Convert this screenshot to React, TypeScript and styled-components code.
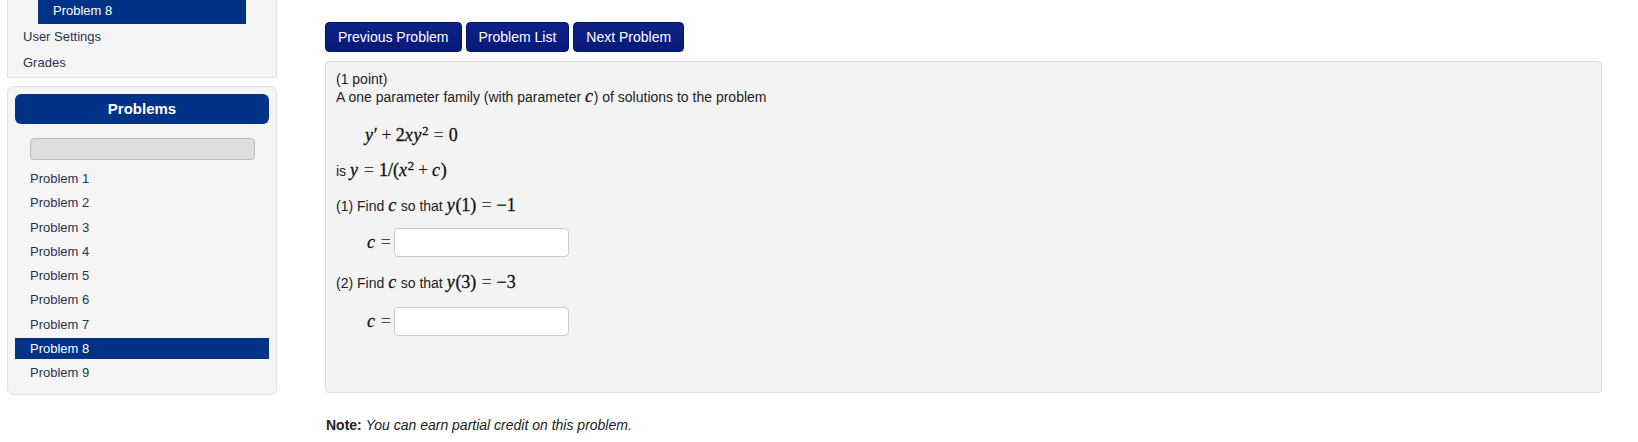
import React from "react";
import styled, { createGlobalStyle } from "styled-components";

const GlobalStyle = createGlobalStyle`
  html, body { margin: 0; padding: 0; background: #ffffff; }
  body {
    font-family: "Liberation Sans", Arial, sans-serif;
    font-size: 13px;
    color: #222;
    overflow: hidden;
  }
`;

const Page = styled.div`
  display: flex;
  align-items: flex-start;
  width: 1638px;
  height: 442px;
  overflow: hidden;
`;

const Sidebar = styled.aside`
  flex: 0 0 270px;
  margin-left: 7px;
  margin-top: -2px;
  display: flex;
  flex-direction: column;
  gap: 8px;
`;

const NavPanel = styled.nav`
  background: #f5f5f5;
  border: 1px solid #e3e3e3;
  border-top: none;
  padding: 0 0 1px;
`;

const NavItem = styled.a<{ $indent?: boolean; $active?: boolean }>`
  display: block;
  height: 26px;
  line-height: 26px;
  margin: ${(p) => (p.$indent ? "0 30px 0 30px" : "0")};
  padding-left: 15px;
  color: ${(p) => (p.$active ? "#ffffff" : "#1f3556")};
  background: ${(p) => (p.$active ? "#003388" : "transparent")};
  text-decoration: none;
  font-size: 13px;
`;

const ProblemsPanel = styled.section`
  background: #f5f5f5;
  border: 1px solid #e3e3e3;
  border-radius: 6px;
  padding: 7px 7px 11px;
  display: flex;
  flex-direction: column;
`;

const PanelHeader = styled.h2`
  margin: 0;
  height: 30px;
  line-height: 30px;
  background: #003388;
  color: #ffffff;
  border-radius: 6px;
  text-align: center;
  font-size: 15px;
  font-weight: bold;
`;

const SearchBox = styled.div`
  margin: 14px 14px 8px 15px;
  height: 20px;
  background: #dddddd;
  border: 1px solid #bdbdbd;
  border-radius: 4px;
`;

const ProblemList = styled.ul`
  list-style: none;
  margin: 0;
  padding: 0;
  display: flex;
  flex-direction: column;
  gap: 3.25px;
`;

const ProblemItem = styled.li<{ $active?: boolean }>`
  height: 21px;
  line-height: 21px;
  padding-left: 15px;
  font-size: 13px;
  color: ${(p) => (p.$active ? "#ffffff" : "#1f3556")};
  background: ${(p) => (p.$active ? "#003388" : "transparent")};
`;

const Main = styled.main`
  flex: 1;
  margin-left: 48px;
  margin-right: 36px;
  padding-top: 22px;
`;

const ButtonBar = styled.div`
  display: flex;
  gap: 4px;
  margin-bottom: 9px;
`;

const NavButton = styled.button`
  height: 30px;
  padding: 0 12px;
  border: 1px solid #06166a;
  border-radius: 4px;
  background: linear-gradient(#0d2288, #081a78);
  color: #ffffff;
  font-family: "Liberation Sans", Arial, sans-serif;
  font-size: 14px;
  cursor: pointer;
`;

const ProblemBox = styled.div`
  background: #f3f3f3;
  border: 1px solid #dcdcdc;
  border-radius: 4px;
  padding: 9px 10px 56px;
`;

const Text = styled.p<{ $mt?: number }>`
  margin: ${(p) => p.$mt ?? 0}px 0 0;
  font-size: 14px;
  line-height: 17px;
  color: #222;
`;

const MathLine = styled.p<{ $mt?: number }>`
  margin: ${(p) => p.$mt ?? 0}px 0 0;
  font-size: 14px;
  line-height: 22px;
  height: 22px;
  color: #222;
`;

const DisplayMath = styled.div<{ $mt?: number }>`
  margin: ${(p) => p.$mt ?? 0}px 0 0;
  padding-left: 29px;
  line-height: 22px;
  height: 22px;
`;

const Math = styled.span`
  font-family: "Liberation Serif", "DejaVu Serif", serif;
  font-size: 18px;
  color: #111;
  -webkit-text-stroke: 0.3px #111;
  white-space: nowrap;
`;

const V = styled.i`
  font-style: italic;
  margin-right: 0.04em;
`;

const Rel = styled.span<{ $tight?: boolean }>`
  margin: ${(p) => (p.$tight ? "0 0 0 0.28em" : "0 0.28em")};
  color: #444;
  -webkit-text-stroke: 0;
`;

const Bin = styled.span`
  margin: 0 0.22em;
  -webkit-text-stroke: 0;
`;

const Sup = styled.sup`
  font-size: 70%;
  line-height: 0;
  vertical-align: 0.5em;
`;

const AnswerRow = styled.div<{ $mt?: number }>`
  display: flex;
  align-items: center;
  margin-top: ${(p) => p.$mt ?? 0}px;
  padding-left: 31px;
  height: 29px;
`;

const AnswerInput = styled.input`
  box-sizing: border-box;
  width: 175px;
  height: 29px;
  margin-left: 3px;
  border: 1px solid #cccccc;
  border-radius: 4px;
  background: #ffffff;
  padding: 4px 6px;
  font-size: 13px;
`;

const Note = styled.p`
  margin: 24px 0 0 1px;
  font-size: 14px;
  line-height: 17px;
  color: #222;
  b { font-weight: bold; }
  i { font-style: italic; }
`;

const problems = [1, 2, 3, 4, 5, 6, 7, 8, 9];

export default function App() {
  return (
    <>
      <GlobalStyle />
      <Page>
        <Sidebar>
          <NavPanel>
            <NavItem $indent $active>Problem 8</NavItem>
            <NavItem>User Settings</NavItem>
            <NavItem>Grades</NavItem>
          </NavPanel>
          <ProblemsPanel>
            <PanelHeader>Problems</PanelHeader>
            <SearchBox />
            <ProblemList>
              {problems.map((n) => (
                <ProblemItem key={n} $active={n === 8}>
                  Problem {n}
                </ProblemItem>
              ))}
            </ProblemList>
          </ProblemsPanel>
        </Sidebar>
        <Main>
          <ButtonBar>
            <NavButton>Previous Problem</NavButton>
            <NavButton>Problem List</NavButton>
            <NavButton>Next Problem</NavButton>
          </ButtonBar>
          <ProblemBox>
            <Text>(1 point)</Text>
            <Text>
              A one parameter family (with parameter <Math><V>c</V></Math>) of
              solutions to the problem
            </Text>
            <DisplayMath $mt={18}>
              <Math>
                <V>y</V>′<Bin>+</Bin>2<V>x</V><V>y</V>
                <Sup>2</Sup>
                <Rel>=</Rel>0
              </Math>
            </DisplayMath>
            <MathLine $mt={13}>
              is{" "}
              <Math>
                <V>y</V>
                <Rel>=</Rel>1/(<V>x</V>
                <Sup>2</Sup>
                <Bin>+</Bin>
                <V>c</V>)
              </Math>
            </MathLine>
            <MathLine $mt={13}>
              (1) Find <Math><V>c</V></Math> so that{" "}
              <Math>
                <V>y</V>(1)<Rel>=</Rel>−1
              </Math>
            </MathLine>
            <AnswerRow $mt={12}>
              <Math>
                <V>c</V>
                <Rel $tight>=</Rel>
              </Math>
              <AnswerInput type="text" />
            </AnswerRow>
            <MathLine $mt={14}>
              (2) Find <Math><V>c</V></Math> so that{" "}
              <Math>
                <V>y</V>(3)<Rel>=</Rel>−3
              </Math>
            </MathLine>
            <AnswerRow $mt={14}>
              <Math>
                <V>c</V>
                <Rel $tight>=</Rel>
              </Math>
              <AnswerInput type="text" />
            </AnswerRow>
          </ProblemBox>
          <Note>
            <b>Note:</b> <i>You can earn partial credit on this problem.</i>
          </Note>
        </Main>
      </Page>
    </>
  );
}
